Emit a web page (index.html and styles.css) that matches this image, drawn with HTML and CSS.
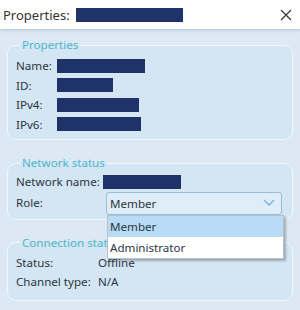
FILE: index.html
```html
<!DOCTYPE html>
<html lang="en">
<head>
    <meta charset="UTF-8">
    <title>Properties</title>
    <link rel="stylesheet" href="styles.css">
</head>
<body>
    <div class="dialog">
        <div class="titlebar">
            <span class="title-text">Properties:</span>
            <span class="mask title-mask"></span>
            <svg class="close" width="12" height="12" viewBox="0 0 12 12">
                <path d="M1 1 L11 11 M11 1 L1 11" stroke="#333" stroke-width="1.2" fill="none"/>
            </svg>
        </div>

        <div class="content">
            <fieldset class="group group-props">
                <legend>Properties</legend>
                <div class="rows">
                    <span>Name:</span><span class="mask" style="width: 88px"></span>
                    <span>ID:</span><span class="mask" style="width: 56px"></span>
                    <span>IPv4:</span><span class="mask" style="width: 82px"></span>
                    <span>IPv6:</span><span class="mask" style="width: 84px"></span>
                </div>
            </fieldset>

            <fieldset class="group group-net">
                <legend>Network status</legend>
                <div class="rows">
                    <span>Network name:</span><span class="mask" style="width: 78px"></span>
                    <span>Role:</span>
                    <div class="select">
                        <span>Member</span>
                        <svg class="chevron" width="12" height="8" viewBox="0 0 12 8">
                            <path d="M1 1 L6 6 L11 1" stroke="#6eb2dd" stroke-width="1.3" fill="none"/>
                        </svg>
                        <ul class="options">
                            <li class="selected">Member</li>
                            <li>Administrator</li>
                        </ul>
                    </div>
                </div>
            </fieldset>

            <fieldset class="group group-conn">
                <legend>Connection status</legend>
                <div class="rows">
                    <span>Status:</span><span>Offline</span>
                    <span>Channel type:</span><span>N/A</span>
                </div>
            </fieldset>
        </div>
    </div>
</body>
</html>
```

FILE: styles.css
```css
*{
    margin: 0;
    padding: 0;
    box-sizing: border-box;
}

body{
    width: 300px;
    height: 310px;
    background-color: #dce9f5;
    font-family: "Noto Sans", "DejaVu Sans", sans-serif;
    font-size: 11.6px;
    color: #2b3642;
    overflow: hidden;
}

.titlebar{
    height: 29px;
    background-color: #ffffff;
    display: flex;
    align-items: center;
    padding: 0 8px 0 3px;
    box-shadow: 0 1px 3px rgba(120, 140, 160, 0.45);
    position: relative;
}

.title-text{
    font-size: 13px;
    color: #333;
    margin-right: 6px;
}

.mask{
    display: block;
    height: 14px;
    background-color: #1f3269;
}

.title-mask{
    width: 107px;
}

.close{
    margin-left: auto;
}

.content{
    padding: 8px 7px 0 7px;
}

.group{
    border: 1px solid #f2f8fd;
    border-radius: 9px;
    background-color: #d4e5f3;
    padding: 0 8px;
    margin-bottom: 15px;
}

.group legend{
    color: #4cb6c9;
    padding: 0 2px;
    margin-left: 4px;
    line-height: 16px;
}

.rows{
    display: grid;
    align-items: center;
}

.rows > span{
    line-height: 19.5px;
}

.group-props .rows{
    grid-template-columns: 41px 1fr;
    padding: 3px 0 5px 0;
}

.group-net .rows{
    grid-template-columns: 87px 1fr;
    padding: 1px 0 4px 0;
    row-gap: 0;
}

.group-conn .rows{
    grid-template-columns: 82px 1fr;
    padding: 2px 0 8px 0;
}

.select{
    position: relative;
    height: 23px;
    margin-left: 3px;
    margin-right: 2px;
    border: 1px solid #9bbcd8;
    border-radius: 3px;
    background-color: #dfedf8;
    display: flex;
    align-items: center;
    padding: 0 6px 0 3px;
}

.chevron{
    margin-left: auto;
}

.options{
    position: absolute;
    top: 22px;
    left: 0;
    width: 177px;
    list-style: none;
    background-color: #ffffff;
    border: 1px solid #b5c2cc;
    box-shadow: 2px 2px 2px rgba(60, 60, 60, 0.35);
    z-index: 2;
}

.options li{
    height: 21px;
    line-height: 21px;
    padding-left: 2px;
}

.options .selected{
    background-color: #b9dcf6;
}
```
